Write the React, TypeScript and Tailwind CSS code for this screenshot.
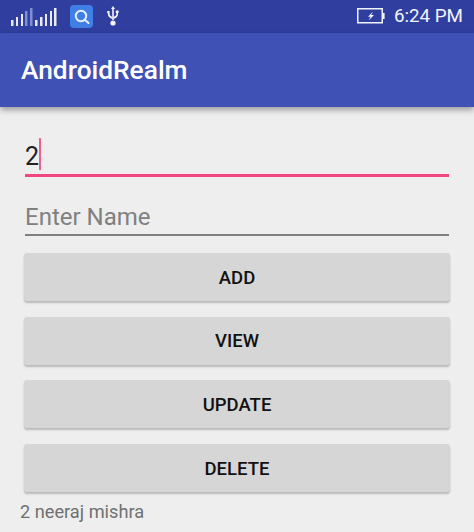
const buttons = ["ADD", "VIEW", "UPDATE", "DELETE"];

function SignalBars({ dim }: { dim?: boolean }) {
  const heights = [6, 9, 12, 15, 18];
  return (
    <div className="flex items-end gap-[2.3px] h-[18px]">
      {heights.map((h, i) => (
        <svg key={i} width="2.5" height={h} className="block">
          <rect width="2.5" height={h} fill={dim && i > 2 ? "#7f8fcf" : "#e8ebf7"} />
        </svg>
      ))}
    </div>
  );
}

function SearchIcon() {
  return (
    <div className="w-[23px] h-[23px] rounded-[4px] bg-[#3f7fe6] flex items-center justify-center">
      <svg width="17" height="17" viewBox="0 0 17 17" fill="none" stroke="#e6f0ff" strokeWidth="2">
        <circle cx="8" cy="8" r="5.2" />
        <path d="M11.8 11.8 L15.5 15" strokeLinecap="round" />
      </svg>
    </div>
  );
}

function UsbIcon() {
  return (
    <svg width="14" height="21" viewBox="0 0 14 21" fill="#f2f4fb">
      <path d="M7 0 L9 3 H7.8 V14 H6.2 V3 H5 Z" />
      <circle cx="7" cy="17" r="2.6" />
      <path d="M1.2 5 H3.6 V8 C3.6 9.2 4.4 9.8 6.4 11 V13 C3 11.5 1.9 10.3 1.9 8 V7.4 C1.3 7.2 1.2 6.8 1.2 6.4 Z" />
      <circle cx="11.2" cy="5.8" r="1.6" />
      <path d="M10.5 6 H12 V8 C12 10.3 11 11.5 7.6 13 V11 C9.6 9.8 10.5 9.2 10.5 8 Z" />
    </svg>
  );
}

function BatteryIcon() {
  return (
    <svg width="28" height="16" viewBox="0 0 28 16" fill="none">
      <rect x="0.75" y="0.75" width="24.5" height="14" stroke="#f2f4fb" strokeWidth="1.5" />
      <rect x="26" y="5" width="1.6" height="6" fill="#f2f4fb" />
      <path d="M16 3.5 L11 8.8 H13.6 L11.6 12.6 L17 7 H14.2 Z" fill="#f2f4fb" />
    </svg>
  );
}

export default function App() {
  return (
    <div className="w-[474px] h-[532px] overflow-hidden bg-[#eeeeee] flex flex-col font-['Roboto',sans-serif]">
      {/* STATUS BAR */}
      <div className="h-[33px] shrink-0 bg-[#303f9f] flex items-center pl-[11px] pr-[11px] text-[#f2f4fb]">
        <div className="flex items-end gap-[2.6px]">
          <SignalBars dim />
          <SignalBars />
        </div>
        <div className="ml-[13px]">
          <SearchIcon />
        </div>
        <div className="ml-[13px]">
          <UsbIcon />
        </div>
        <div className="ml-auto flex items-center gap-[9px]">
          <BatteryIcon />
          <span className="text-[18.8px] leading-none">6:24 PM</span>
        </div>
      </div>

      {/* TOOLBAR */}
      <div className="h-[74px] shrink-0 bg-[#3f51b5] flex items-center pl-[21px] shadow-[0_3px_6px_rgba(0,0,0,0.35)] z-10">
        <span className="text-[26.3px] font-medium text-white leading-none">AndroidRealm</span>
      </div>

      {/* FORM */}
      <div className="flex-1 flex flex-col px-[24px]">
        <div className="mt-[31px] mx-px h-[39px] border-b-[3px] border-[#f0487f] flex items-start">
          <span className="text-[25px] leading-[38px] text-[#222222]">2</span>
          <span className="w-[2px] h-[32px] bg-[#f0608f]" />
        </div>

        <div className="mt-[26px] mx-px h-[33px] border-b-2 border-[#808080] flex items-start">
          <span className="text-[24px] leading-[28px] text-[#808080]">Enter Name</span>
        </div>

        <div className="mt-[17px] flex flex-col gap-[15.67px]">
          {buttons.map((label) => (
            <button
              key={label}
              className="h-[48px] w-full rounded-[3px] bg-[#d6d6d6] shadow-[0_2px_2px_rgba(0,0,0,0.22)] pt-[2px] text-[18.5px] font-medium text-[#111111] leading-none"
            >
              {label}
            </button>
          ))}
        </div>

        <div className="mt-[8px] -ml-[4px] text-[18.2px] leading-[24px] text-[#707070]">2 neeraj mishra</div>
      </div>
    </div>
  );
}
